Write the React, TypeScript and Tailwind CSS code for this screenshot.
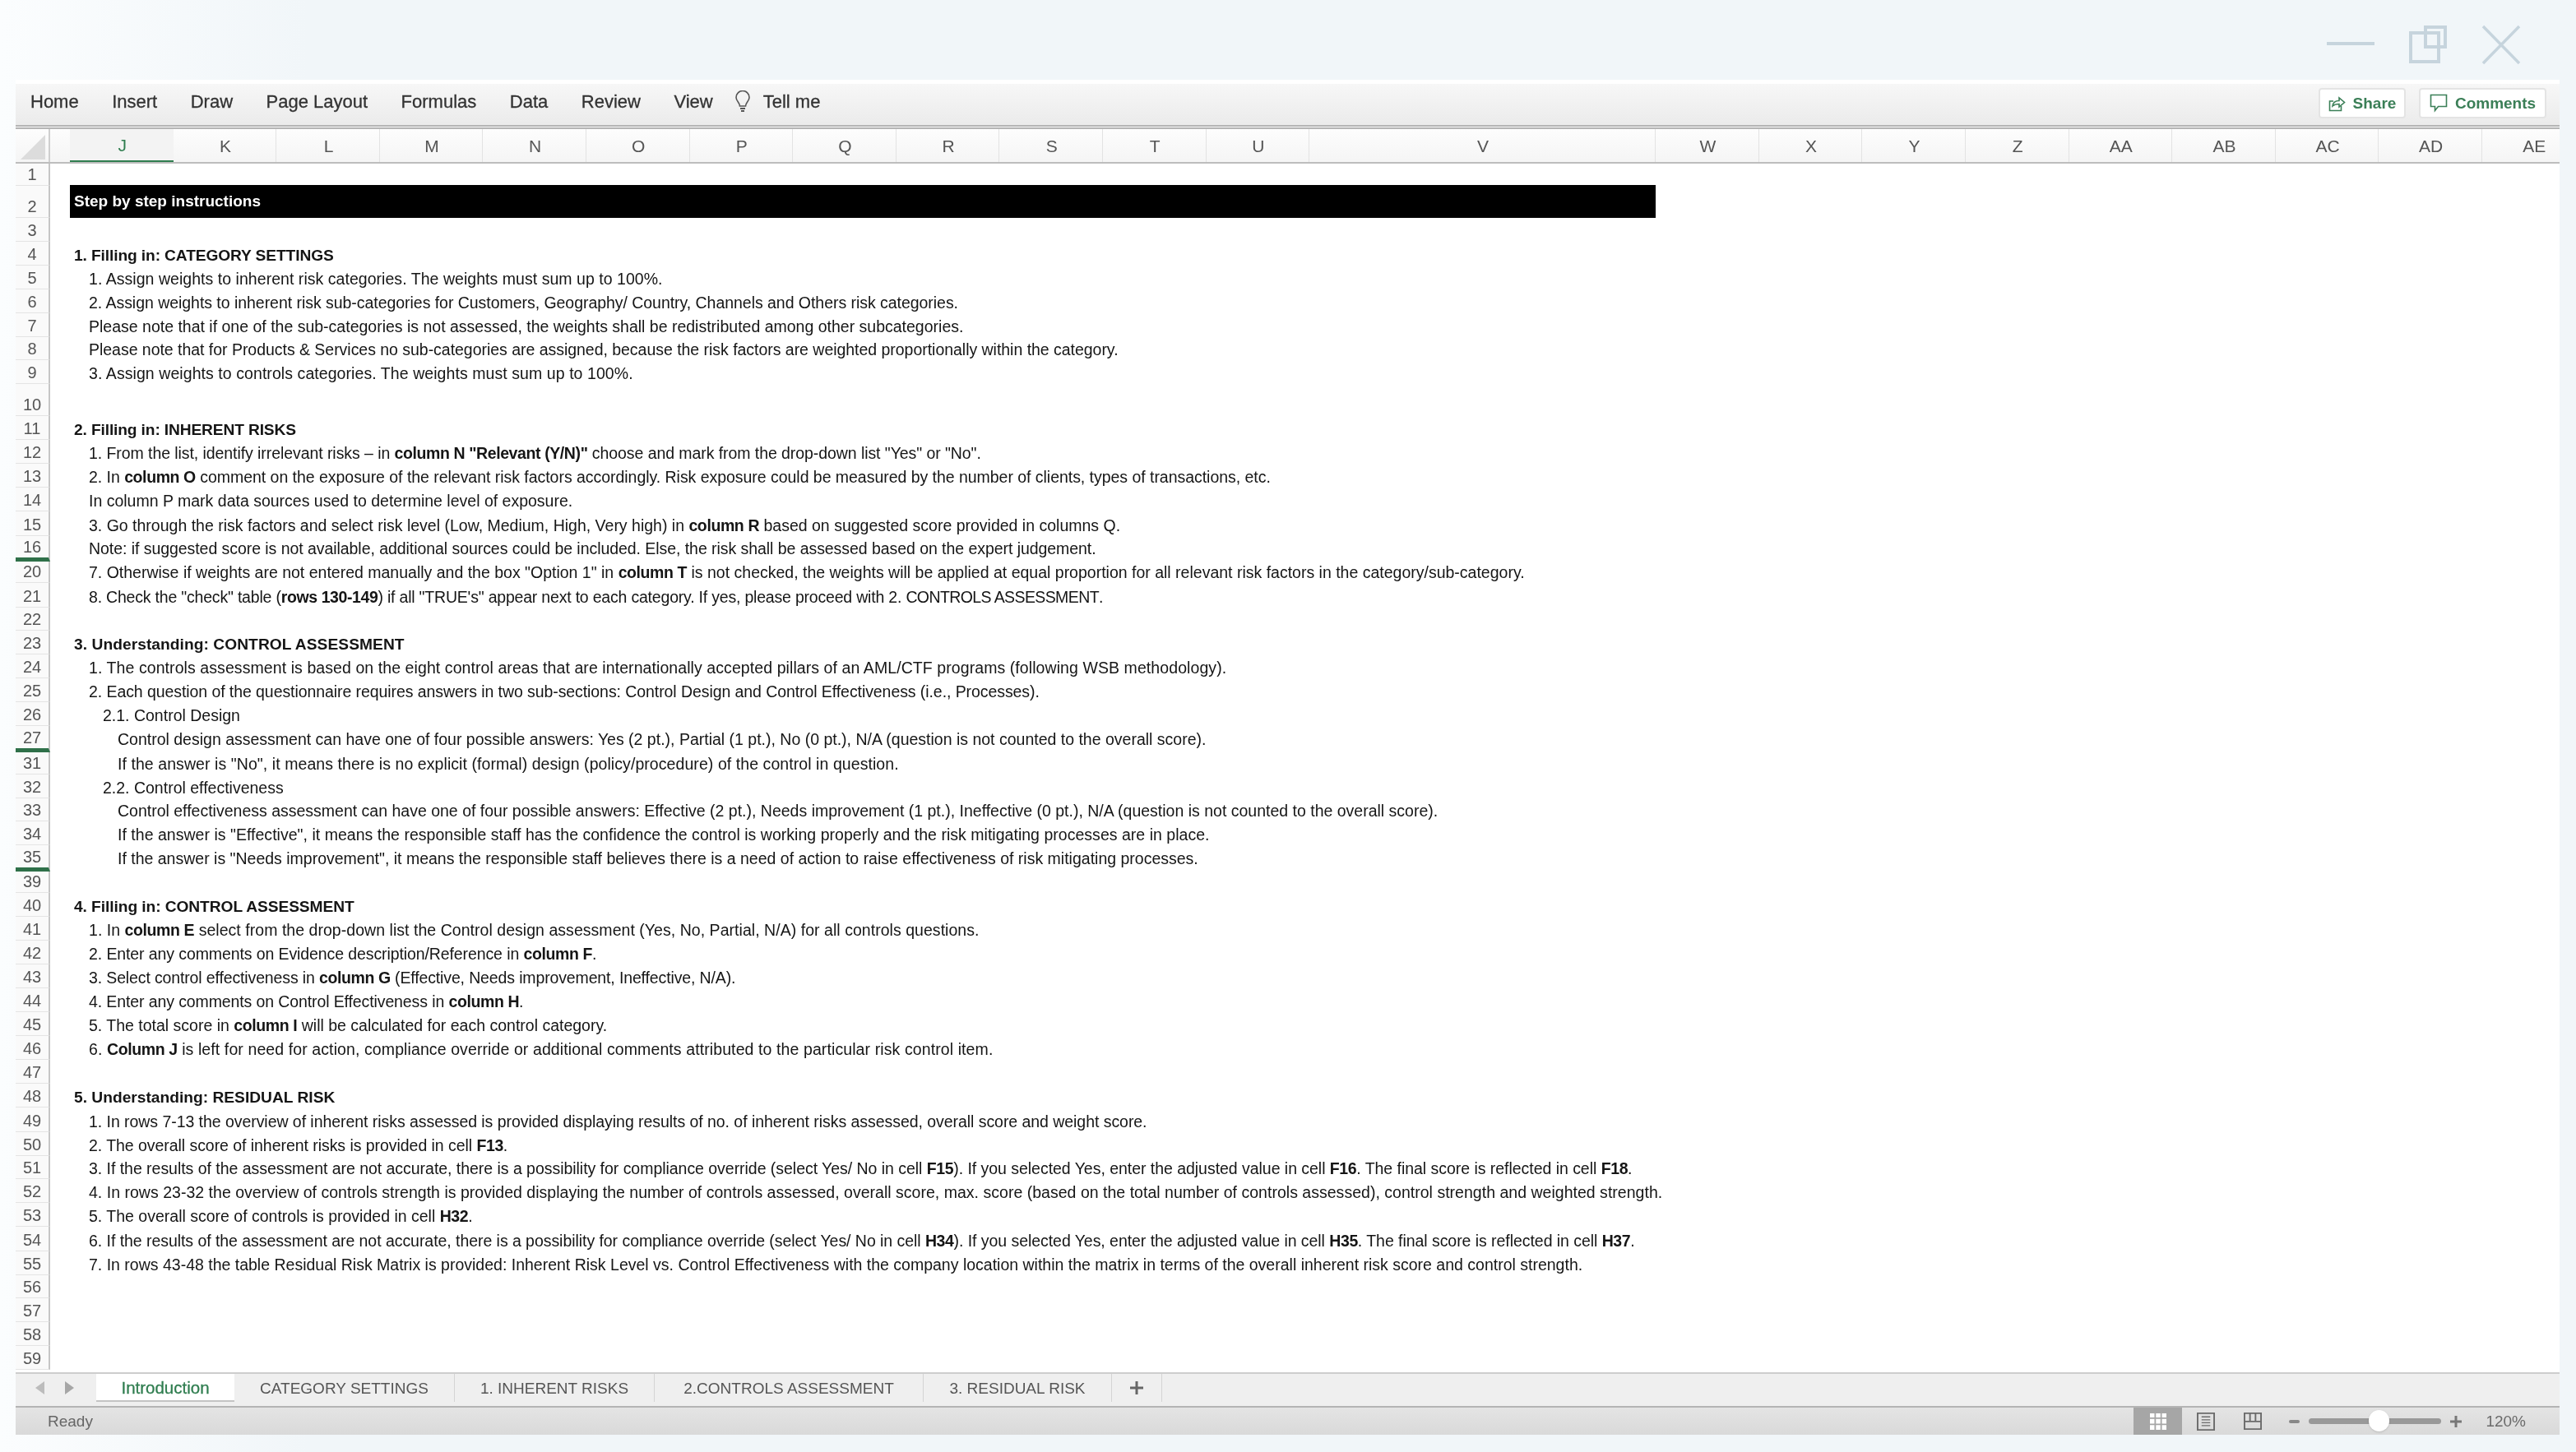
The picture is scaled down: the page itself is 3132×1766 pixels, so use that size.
import type { ReactNode } from "react";

type Row = {
  n: number;
  h: number;
  hidden?: boolean;
  indent?: "a" | "b" | "c" | "d";
  bold?: boolean;
  ls?: number;
  text?: ReactNode;
};

const B = ({ children }: { children: ReactNode }) => <b className="font-bold tracking-[-0.4px]">{children}</b>;

const columns = ["J", "K", "L", "M", "N", "O", "P", "Q", "R", "S", "T", "U", "V", "W", "X", "Y", "Z", "AA", "AB", "AC", "AD", "AE"];

const rows: Row[] = [
  { n: 1, h: 27 },
  { n: 2, h: 39 },
  { n: 3, h: 29 },
  { n: 4, h: 29, indent: "a", bold: true, ls: -0.12, text: "1. Filling in: CATEGORY SETTINGS" },
  { n: 5, h: 29, indent: "b", ls: 0.04, text: "1. Assign weights to inherent risk categories. The weights must sum up to 100%." },
  { n: 6, h: 29, indent: "b", ls: -0.04, text: "2. Assign weights to inherent risk sub-categories for Customers, Geography/ Country, Channels and Others risk categories." },
  { n: 7, h: 29, indent: "b", text: "Please note that if one of the sub-categories is not assessed, the weights shall be redistributed among other subcategories." },
  { n: 8, h: 28, indent: "b", ls: -0.03, text: "Please note that for Products & Services no sub-categories are assigned, because the risk factors are weighted proportionally within the category." },
  { n: 9, h: 29, indent: "b", ls: 0.07, text: "3. Assign weights to controls categories. The weights must sum up to 100%." },
  { n: 10, h: 39 },
  { n: 11, h: 29, indent: "a", bold: true, ls: -0.14, text: "2. Filling in: INHERENT RISKS" },
  { n: 12, h: 29, indent: "b", ls: -0.07, text: <>1. From the list, identify irrelevant risks – in <B>column N "Relevant (Y/N)"</B> choose and mark from the drop-down list "Yes" or "No".</> },
  { n: 13, h: 29, indent: "b", ls: -0.035, text: <>2. In <B>column O</B> comment on the exposure of the relevant risk factors accordingly. Risk exposure could be measured by the number of clients, types of transactions, etc.</> },
  { n: 14, h: 29, indent: "b", text: "In column P mark data sources used to determine level of exposure." },
  { n: 15, h: 30, indent: "b", text: <>3. Go through the risk factors and select risk level (Low, Medium, High, Very high) in <B>column R</B> based on suggested score provided in columns Q.</> },
  { n: 16, h: 31, hidden: true, indent: "b", ls: -0.055, text: "Note: if suggested score is not available, additional sources could be included. Else, the risk shall be assessed based on the expert judgement." },
  { n: 20, h: 26, indent: "b", text: <>7. Otherwise if weights are not entered manually and the box "Option 1" in <B>column T</B> is not checked, the weights will be applied at equal proportion for all relevant risk factors in the category/sub-category.</> },
  { n: 21, h: 30, indent: "b", ls: -0.2, text: <>8. Check the "check" table (<B>rows 130-149</B>) if all "TRUE's" appear next to each category. If yes, please proceed with 2. <span className="tracking-[-0.6px]">CONTROLS ASSESSMENT</span>.</> },
  { n: 22, h: 28 },
  { n: 23, h: 29, indent: "a", bold: true, ls: 0.05, text: "3. Understanding: CONTROL ASSESSMENT" },
  { n: 24, h: 29, indent: "b", ls: 0.08, text: "1. The controls assessment is based on the eight control areas that are internationally accepted pillars of an AML/CTF programs (following WSB methodology)." },
  { n: 25, h: 29, indent: "b", ls: -0.075, text: "2. Each question of the questionnaire requires answers in two sub-sections: Control Design and Control Effectiveness (i.e., Processes)." },
  { n: 26, h: 29, indent: "c", text: "2.1. Control Design" },
  { n: 27, h: 32, hidden: true, indent: "d", text: "Control design assessment can have one of four possible answers: Yes (2 pt.), Partial (1 pt.), No (0 pt.), N/A (question is not counted to the overall score)." },
  { n: 31, h: 27, indent: "d", ls: 0.07, text: 'If the answer is "No", it means there is no explicit (formal) design (policy/procedure) of the control in question.' },
  { n: 32, h: 29, indent: "c", text: "2.2. Control effectiveness" },
  { n: 33, h: 28, indent: "d", text: "Control effectiveness assessment can have one of four possible answers: Effective (2 pt.), Needs improvement (1 pt.), Ineffective (0 pt.), N/A (question is not counted to the overall score)." },
  { n: 34, h: 29, indent: "d", ls: 0.025, text: 'If the answer is "Effective", it means the responsible staff has the confidence the control is working properly and the risk mitigating processes are in place.' },
  { n: 35, h: 32, hidden: true, indent: "d", text: 'If the answer is "Needs improvement", it means the responsible staff believes there is a need of action to raise effectiveness of risk mitigating processes.' },
  { n: 39, h: 26 },
  { n: 40, h: 29, indent: "a", bold: true, ls: -0.08, text: "4. Filling in: CONTROL ASSESSMENT" },
  { n: 41, h: 29, indent: "b", ls: 0.04, text: <>1. In <B>column E</B> select from the drop-down list the Control design assessment (Yes, No, Partial, N/A) for all controls questions.</> },
  { n: 42, h: 29, indent: "b", ls: -0.1, text: <>2. Enter any comments on Evidence description/Reference in <B>column F</B>.</> },
  { n: 43, h: 29, indent: "b", ls: -0.135, text: <>3. Select control effectiveness in <B>column G</B> (Effective, Needs improvement, Ineffective, N/A).</> },
  { n: 44, h: 29, indent: "b", ls: -0.11, text: <>4. Enter any comments on Control Effectiveness in <B>column H</B>.</> },
  { n: 45, h: 29, indent: "b", text: <>5. The total score in <B>column I</B> will be calculated for each control category.</> },
  { n: 46, h: 29, indent: "b", ls: 0.1, text: <>6. <B>Column J</B> is left for need for action, compliance override or additional comments attributed to the particular risk control item.</> },
  { n: 47, h: 29 },
  { n: 48, h: 29, indent: "a", bold: true, text: "5. Understanding: RESIDUAL RISK" },
  { n: 49, h: 30, indent: "b", ls: -0.05, text: "1. In rows 7-13 the overview of inherent risks assessed is provided displaying results of no. of inherent risks assessed, overall score and weight score." },
  { n: 50, h: 29, indent: "b", ls: -0.05, text: <>2. The overall score of inherent risks is provided in cell <B>F13</B>.</> },
  { n: 51, h: 28, indent: "b", ls: -0.035, text: <>3. If the results of the assessment are not accurate, there is a possibility for compliance override (select Yes/ No in cell <B>F15</B>). If you selected Yes, enter the adjusted value in cell <B>F16</B>. The final score is reflected in cell <B>F18</B>.</> },
  { n: 52, h: 29, indent: "b", ls: 0.02, text: "4. In rows 23-32 the overview of controls strength is provided displaying the number of controls assessed, overall score, max. score (based on the total number of controls assessed), control strength and weighted strength." },
  { n: 53, h: 29, indent: "b", text: <>5. The overall score of controls is provided in cell <B>H32</B>.</> },
  { n: 54, h: 30, indent: "b", ls: -0.05, text: <>6. If the results of the assessment are not accurate, there is a possibility for compliance override (select Yes/ No in cell <B>H34</B>). If you selected Yes, enter the adjusted value in cell <B>H35</B>. The final score is reflected in cell <B>H37</B>.</> },
  { n: 55, h: 29, indent: "b", text: "7. In rows 43-48 the table Residual Risk Matrix is provided: Inherent Risk Level vs. Control Effectiveness with the company location within the matrix in terms of the overall inherent risk score and control strength." },
  { n: 56, h: 28 },
  { n: 57, h: 29 },
  { n: 58, h: 29 },
  { n: 59, h: 29 },
];

const indents = { a: "pl-[5px]", b: "pl-[23px]", c: "pl-[40px]", d: "pl-[58px]" };

const ribbonTabs = ["Home", "Insert", "Draw", "Page Layout", "Formulas", "Data", "Review", "View"];

const sheets = [
  { name: "Introduction", w: "w-[168px]", active: true },
  { name: "CATEGORY SETTINGS", w: "w-[268px]" },
  { name: "1. INHERENT RISKS", w: "w-[243px]" },
  { name: "2.CONTROLS ASSESSMENT", w: "w-[327px]" },
  { name: "3. RESIDUAL RISK", w: "w-[229px]" },
];

function WindowControls() {
  return (
    <svg className="absolute top-[28px] right-[64px]" width="240" height="54" viewBox="0 0 240 54" fill="none" stroke="#c6d4dd">
      <path d="M1 25h58" strokeWidth="4" />
      <path d="M121 5h24v24h-24zM103 12h34v35h-34z" strokeWidth="4" />
      <path d="M191 4l44 45M235 4l-44 45" strokeWidth="3.5" />
    </svg>
  );
}

function Bulb() {
  return (
    <svg width="22" height="26" viewBox="0 0 22 26" fill="none" stroke="#555" strokeWidth="1.6">
      <path d="M7.5 19c0-4-4.5-6-4.5-10.500a8 8 0 0 1 16 0C19 13 14.500 15 14.500 19z" />
      <path d="M8 22h6M9 25h4" strokeWidth="2" />
    </svg>
  );
}

function Ribbon() {
  return (
    <div className="flex h-[55px] shrink-0 items-center border-b-[5px] border-double border-b-[#b5b5b5] bg-gradient-to-b from-[#f7f7f7] to-[#ebebeb] pr-[16px] pb-[4px] pl-[18px]">
      <div className="mb-[4px] flex items-center gap-[40.5px] text-[22px] text-[#333] [-webkit-text-stroke:0.3px]">
        {ribbonTabs.map((tab) => (
          <span key={tab}>{tab}</span>
        ))}
      </div>
      <div className="mb-[4px] ml-[25px] flex items-center gap-[14px] text-[22px] text-[#333] [-webkit-text-stroke:0.3px]">
        <Bulb />
        <span>Tell me</span>
      </div>
      <div className="ml-auto flex items-center gap-[16px] text-[19px] font-bold text-[#3b7f57]">
        <button className="flex h-[37px] w-[106px] items-center justify-center gap-[8px] rounded-[4px] border-2 border-[#e4e4e4] bg-white pt-[2px]">
          <svg className="-mt-[2px]" width="22" height="22" viewBox="0 0 22 22" fill="none" stroke="#3b7f57" strokeWidth="1.6">
            <path d="M6 9H1.500v11.500h14V15" />
            <path d="M5 15c.5-4 3.500-6.500 8-6.500V5l6.500 5.500L13 16v-3.500c-3.500 0-6 .7-8 2.500z" />
          </svg>
          Share
        </button>
        <button className="flex h-[37px] w-[155px] items-center justify-center gap-[9px] rounded-[4px] border-2 border-[#e4e4e4] bg-white pt-[2px]">
          <svg className="-mt-[2px]" width="22" height="24" viewBox="0 0 22 24" fill="none" stroke="#3b7f57" strokeWidth="1.6">
            <path d="M1.500 2.500h19v14h-10l-4 5v-5h-5z" />
          </svg>
          Comments
        </button>
      </div>
    </div>
  );
}

function ColumnHeader() {
  return (
    <div className="flex h-[42px] shrink-0 overflow-hidden border-b-2 border-b-[#bdbdbd] bg-gradient-to-b from-[#fdfdfd] to-[#f5f5f5]">
      <div className="flex w-[42px] shrink-0 items-end justify-end border-r-2 border-r-[#cfcfcf] pr-[4px] pb-[3px]">
        <svg width="30" height="30" viewBox="0 0 30 30">
          <path d="M30 0v30H0z" fill="#dcdcdc" />
        </svg>
      </div>
      <div className="w-[24px] shrink-0" />
      {columns.map((col) => (
        <div
          key={col}
          className={`flex shrink-0 items-center justify-center pt-[2px] pl-[2px] text-[21px] ${col === "V" ? "w-[421px]" : "w-[125.6px]"} ${
            col === "J" ? "-mb-[2px] border-b-[4px] border-b-[#2f7d4f] bg-[#f3f3f3] text-[#2f7d4f]" : "border-r border-r-[#e3e3e3] text-[#555]"
          }`}
        >
          {col}
        </div>
      ))}
    </div>
  );
}

function SheetRow({ row }: { row: Row }) {
  return (
    <div className="flex" style={{ height: row.h }}>
      <div
        className={`flex w-[42px] shrink-0 items-end justify-center border-r-2 border-r-[#c6c6c6] bg-[#fafafa] text-[20px] leading-[25px] text-[#555] ${
          row.hidden ? "border-b-[5px] border-b-[#2f7049]" : "border-b border-b-[#e4e4e4]"
        }`}
      >
        {row.n}
      </div>
      <div className="w-[24px] shrink-0" />
      {row.n === 2 ? (
        <div className="flex h-[40px] w-[1928px] -translate-y-px items-center bg-black pl-[5px] text-[19px] font-bold text-white">
          Step by step instructions
        </div>
      ) : row.text ? (
        <div
          className={`flex items-end leading-[25px] whitespace-nowrap text-[#151515] ${indents[row.indent ?? "a"]} ${row.bold ? "text-[19.2px] font-bold" : "text-[19.5px]"} ${
            row.hidden ? "pb-[3px]" : ""
          }`}
          style={{ letterSpacing: row.ls ?? 0 }}
        >
          <span>{row.text}</span>
        </div>
      ) : null}
    </div>
  );
}

function SheetTabs() {
  return (
    <div className="flex h-[43px] shrink-0 items-start border-t-2 border-b-2 border-t-[#cdcdcd] border-b-[#b4b4b4] bg-[#efefef]">
      <div className="flex h-[34px] w-[98px] shrink-0 items-center gap-[25px] pl-[24px]">
        <svg width="11" height="16" viewBox="0 0 11 16"><path d="M11 0v16L0 8z" fill="#bcbcbc" /></svg>
        <svg width="11" height="16" viewBox="0 0 11 16"><path d="M0 0v16l11-8z" fill="#a6a6a6" /></svg>
      </div>
      {sheets.map((sheet) => (
        <div
          key={sheet.name}
          className={`flex h-[34px] shrink-0 items-center justify-center pt-[2px] ${sheet.w} ${
            sheet.active
              ? "border-b-2 border-b-[#c4c4c4] bg-white text-[20.5px] text-[#2f7d4f] [-webkit-text-stroke:0.3px]"
              : "border-r border-r-[#d4d4d4] text-[19px] text-[#555]"
          }`}
        >
          {sheet.name}
        </div>
      ))}
      <div className="flex h-[34px] w-[61px] shrink-0 items-center justify-center border-r border-r-[#d4d4d4]">
        <svg width="16" height="16" viewBox="0 0 16 16" stroke="#666" strokeWidth="3"><path d="M8 0v16M0 8h16" /></svg>
      </div>
    </div>
  );
}

function StatusBar() {
  return (
    <div className="flex h-[33px] shrink-0 items-center bg-gradient-to-b from-[#e4e4e4] to-[#d9d9d9] text-[19px] text-[#666]">
      <span className="pt-[2px] pl-[39px]">Ready</span>
      <div className="ml-auto flex h-full items-center pr-[41px]">
        <div className="flex h-full w-[59px] items-center justify-center bg-[#a6a6a6]">
          <svg width="20" height="20" viewBox="0 0 22 24" fill="#fff" preserveAspectRatio="none">
            <path d="M0 0h6v6H0zM8 0h6v6H8zM16 0h6v6h-6zM0 8h6v7H0zM8 8h6v7H8zM16 8h6v7h-6zM0 17h6v7H0zM8 17h6v7H8zM16 17h6v7h-6z" />
          </svg>
        </div>
        <div className="flex h-full w-[57px] items-center justify-center">
          <svg width="22" height="22" viewBox="0 0 23 25" fill="none" stroke="#6b6b6b" preserveAspectRatio="none">
            <path d="M1 1h21v23H1z" strokeWidth="2" />
            <path d="M6 6h11M6 10h11M6 14h11M6 18h11" strokeWidth="1.500" />
          </svg>
        </div>
        <div className="flex h-full w-[58px] items-center justify-center">
          <svg width="22" height="21" viewBox="0 0 23 25" fill="none" stroke="#6b6b6b" strokeWidth="2" preserveAspectRatio="none">
            <path d="M1 1h21v23H1zM1 13h21M8 1v12M15 1v12" />
          </svg>
        </div>
        <div className="ml-[15px] h-[4px] w-[13px] rounded-sm bg-[#888]" />
        <div className="relative ml-[11px] h-[7px] w-[161px] rounded-full bg-[#999]">
          <div className="absolute top-[-10px] left-[73px] h-[26px] w-[25px] rounded-full bg-white shadow-sm" />
        </div>
        <svg className="ml-[11px]" width="14" height="14" viewBox="0 0 14 14" stroke="#777" strokeWidth="3"><path d="M7 0v14M0 7h14" /></svg>
        <span className="ml-[29px] pt-[2px] text-[#6b6b6b]">120%</span>
      </div>
    </div>
  );
}

export default function App() {
  return (
    <div className="relative flex h-[1766px] w-[3132px] flex-col overflow-hidden bg-[linear-gradient(90deg,#fbfdfe_0%,#f1f6f9_12%)] pt-[97px] pr-[20px] pb-[21px] pl-[19px] font-['Liberation_Sans',Arial,sans-serif] blur-[0.5px]">
      <WindowControls />
      <div className="flex flex-1 flex-col overflow-hidden bg-white pt-[5px]">
        <Ribbon />
        <ColumnHeader />
        <div className="flex-1 overflow-hidden">
          {rows.map((row) => (
            <SheetRow key={row.n} row={row} />
          ))}
        </div>
        <SheetTabs />
        <StatusBar />
      </div>
    </div>
  );
}
